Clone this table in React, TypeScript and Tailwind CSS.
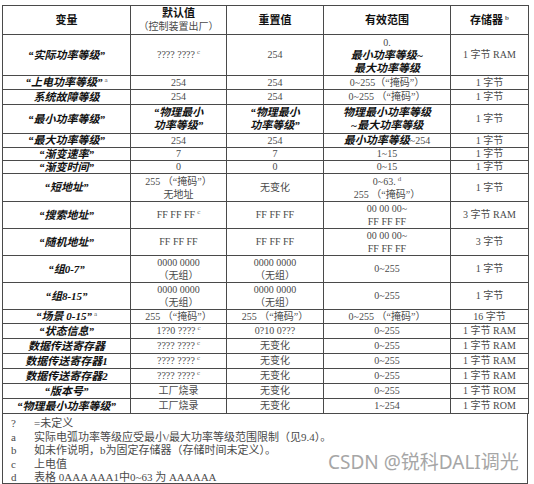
import type { ReactNode } from "react";

// bold italic variable names
const BI = ({ children }: { children: ReactNode }) => (
  <span className="font-bold italic text-[#111] text-[11px]">{children}</span>
);

const Sup = ({ children }: { children: ReactNode }) => (
  <sup className="text-[7px] text-[#666] ml-[2px] -top-[4px]">{children}</sup>
);

const Lines = ({ items }: { items: ReactNode[] }) => (
  <div className="flex flex-col items-center">
    {items.map((it, i) => (
      <div key={i} className="leading-[13px] whitespace-nowrap">
        {it}
      </div>
    ))}
  </div>
);

type Row = {
  h: string;
  name: ReactNode;
  def: ReactNode;
  reset: ReactNode;
  range: ReactNode;
  mem: ReactNode;
};

const Q = ({ s }: { s: string }) => <BI>“{s}”</BI>;

const rows: Row[] = [
  {
    h: "h-[41px]",
    name: <Q s="实际功率等级" />,
    def: (
      <>
        ???? ????<Sup>c</Sup>
      </>
    ),
    reset: "254",
    range: (
      <Lines
        items={["0.", <BI>最小功率等级~</BI>, <BI>最大功率等级</BI>]}
      />
    ),
    mem: "1 字节 RAM",
  },
  {
    h: "h-[14px]",
    name: (
      <>
        <Q s="上电功率等级" />
        <Sup>a</Sup>
      </>
    ),
    def: "254",
    reset: "254",
    range: "0~255（“掩码”）",
    mem: "1 字节",
  },
  {
    h: "h-[15px]",
    name: <BI>系统故障等级</BI>,
    def: "254",
    reset: "254",
    range: "0~255 （“掩码”）",
    mem: "1 字节",
  },
  {
    h: "h-[29px]",
    name: <Q s="最小功率等级" />,
    def: <Lines items={[<BI>“物理最小</BI>, <BI>功率等级”</BI>]} />,
    reset: <Lines items={[<BI>“物理最小</BI>, <BI>功率等级”</BI>]} />,
    range: (
      <Lines items={[<BI>物理最小功率等级</BI>, <BI>~最大功率等级</BI>]} />
    ),
    mem: "1 字节",
  },
  {
    h: "h-[14px]",
    name: <Q s="最大功率等级" />,
    def: "254",
    reset: "254",
    range: (
      <>
        <BI>最小功率等级</BI>~254
      </>
    ),
    mem: "1 字节",
  },
  {
    h: "h-[13px]",
    name: <Q s="渐变速率" />,
    def: "7",
    reset: "7",
    range: "1~15",
    mem: "1 字节",
  },
  {
    h: "h-[13px]",
    name: <Q s="渐变时间" />,
    def: "0",
    reset: "0",
    range: "0~15",
    mem: "1 字节",
  },
  {
    h: "h-[28px]",
    name: <Q s="短地址" />,
    def: <Lines items={["255 （“掩码”）", "无地址"]} />,
    reset: "无变化",
    range: (
      <Lines
        items={[
          <>
            0~63.<Sup>d</Sup>
          </>,
          "255 （“掩码”）",
        ]}
      />
    ),
    mem: "1 字节",
  },
  {
    h: "h-[27px]",
    name: <Q s="搜索地址" />,
    def: (
      <>
        FF FF FF<Sup>c</Sup>
      </>
    ),
    reset: "FF FF FF",
    range: <Lines items={["00 00 00~", "FF FF FF"]} />,
    mem: "3 字节 RAM",
  },
  {
    h: "h-[27px]",
    name: <Q s="随机地址" />,
    def: "FF FF FF",
    reset: "FF FF FF",
    range: <Lines items={["00 00 00~", "FF FF FF"]} />,
    mem: "3 字节",
  },
  {
    h: "h-[27px]",
    name: <Q s="组0-7" />,
    def: <Lines items={["0000 0000", "（无组）"]} />,
    reset: <Lines items={["0000 0000", "（无组）"]} />,
    range: "0~255",
    mem: "1 字节",
  },
  {
    h: "h-[25px]",
    name: <Q s="组8-15" />,
    def: <Lines items={["0000 0000", "（无组）"]} />,
    reset: <Lines items={["0000 0000", "（无组）"]} />,
    range: "0~255",
    mem: "1 字节",
  },
  {
    h: "h-[14px]",
    name: (
      <>
        <Q s="场景 0-15" />
        <Sup>a</Sup>
      </>
    ),
    def: "255 （“掩码”）",
    reset: "255 （“掩码”）",
    range: "0~255 （“掩码”）",
    mem: "16 字节",
  },
  {
    h: "h-[15px]",
    name: <Q s="状态信息" />,
    def: (
      <>
        1??0 ????<Sup>c</Sup>
      </>
    ),
    reset: "0?10 0???",
    range: "0~255",
    mem: "1 字节 RAM",
  },
  {
    h: "h-[15px]",
    name: <BI>数据传送寄存器</BI>,
    def: (
      <>
        ???? ????<Sup>c</Sup>
      </>
    ),
    reset: "无变化",
    range: "0~255",
    mem: "1 字节 RAM",
  },
  {
    h: "h-[15px]",
    name: <BI>数据传送寄存器1</BI>,
    def: (
      <>
        ???? ????<Sup>c</Sup>
      </>
    ),
    reset: "无变化",
    range: "0~255",
    mem: "1 字节 RAM",
  },
  {
    h: "h-[15px]",
    name: <BI>数据传送寄存器2</BI>,
    def: (
      <>
        ???? ????<Sup>c</Sup>
      </>
    ),
    reset: "无变化",
    range: "0~255",
    mem: "1 字节 RAM",
  },
  {
    h: "h-[15px]",
    name: <Q s="版本号" />,
    def: "工厂烧录",
    reset: "无变化",
    range: "0~255",
    mem: "1 字节 ROM",
  },
  {
    h: "h-[15px]",
    name: <Q s="物理最小功率等级" />,
    def: "工厂烧录",
    reset: "无变化",
    range: "1~254",
    mem: "1 字节 ROM",
  },
];

const notes: [string, string][] = [
  ["?", "=未定义"],
  ["a", "实际电弧功率等级应受最小/最大功率等级范围限制（见9.4）。"],
  ["b", "如未作说明，b为固定存储器（存储时间未定义）。"],
  ["c", "上电值"],
  ["d", "表格 0AAA AAA1中0~63 为 AAAAAA"],
];

const cell = "border border-[#4a4a4a] p-0 text-center align-middle leading-[10px]";

export default function App() {
  return (
    <div
      className="relative w-[534px] h-[484px] bg-white pt-[5px] pl-[2px] text-[10px] text-[#4a4a4a]"
      style={{
        fontFamily:
          '"Liberation Serif", "Noto Sans CJK SC", serif',
      }}
    >
      <table className="table-fixed border-collapse w-[526px]">
        <colgroup>
          <col className="w-[128px]" />
          <col className="w-[96px]" />
          <col className="w-[97px]" />
          <col className="w-[127px]" />
          <col className="w-[78px]" />
        </colgroup>
        <thead>
          <tr className="h-[29px]">
            <th className={`${cell} text-[11px] font-bold text-[#111]`}>
              变量
            </th>
            <th className={`${cell} font-normal`}>
              <div className="text-[11px] font-bold text-[#111] leading-[13px]">
                默认值
              </div>
              <div className="text-[10px] leading-[13px]">（控制装置出厂）</div>
            </th>
            <th className={`${cell} text-[11px] font-bold text-[#111]`}>
              重置值
            </th>
            <th className={`${cell} text-[11px] font-bold text-[#111]`}>
              有效范围
            </th>
            <th className={`${cell} text-[11px] font-bold text-[#111]`}>
              存储器<Sup>b</Sup>
            </th>
          </tr>
        </thead>
        <tbody>
          {rows.map((r, i) => (
            <tr key={i} className={r.h}>
              <td className={`${cell} whitespace-nowrap`}>{r.name}</td>
              <td className={`${cell} whitespace-nowrap`}>{r.def}</td>
              <td className={`${cell} whitespace-nowrap`}>{r.reset}</td>
              <td className={`${cell} whitespace-nowrap`}>{r.range}</td>
              <td className={`${cell} whitespace-nowrap`}>{r.mem}</td>
            </tr>
          ))}
        </tbody>
      </table>

      {/* footnotes */}
      <div className="w-[526px] h-[70px] pt-[3px] border-x border-b border-[#4a4a4a] text-[11px]">
        {notes.map(([k, t]) => (
          <div key={k} className="flex leading-[13.5px]">
            <span className="w-[31px] pl-[8px]">{k}</span>
            <span>{t}</span>
          </div>
        ))}
      </div>

      {/* watermark */}
      <div
        className="absolute left-[328px] top-[451px] text-[19px] leading-[22px] text-[#a6a6a6]"
        style={{ fontFamily: '"Noto Sans", "Noto Sans CJK SC", sans-serif' }}
      >
        CSDN @锐科DALI调光
      </div>
    </div>
  );
}
